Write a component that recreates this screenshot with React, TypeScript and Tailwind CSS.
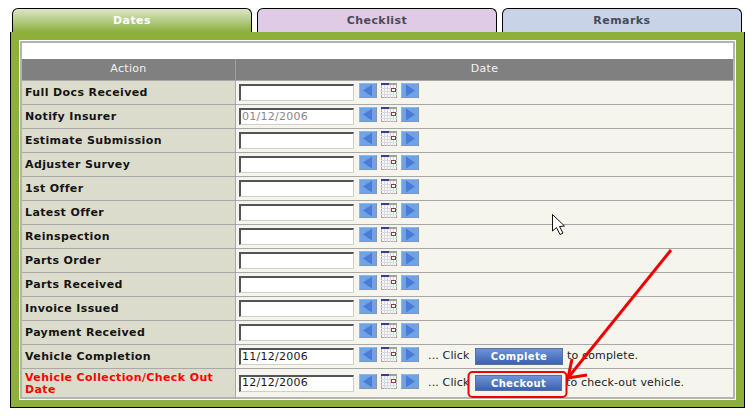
import React from "react";

const rows: { label: string; value?: string; disabled?: boolean; extra?: [string, string, string]; red?: boolean; tall?: boolean }[] = [
  { label: "Full Docs Received" },
  { label: "Notify Insurer", value: "01/12/2006", disabled: true },
  { label: "Estimate Submission" },
  { label: "Adjuster Survey" },
  { label: "1st Offer" },
  { label: "Latest Offer" },
  { label: "Reinspection" },
  { label: "Parts Order" },
  { label: "Parts Received" },
  { label: "Invoice Issued" },
  { label: "Payment Received" },
  { label: "Vehicle Completion", value: "11/12/2006", extra: ["Complete", "to complete.", "w-[88px] h-[17px]"] },
  { label: "Vehicle Collection/Check Out Date", value: "12/12/2006", extra: ["Checkout", "to check-out vehicle.", "w-[87px] h-[16px]"], red: true, tall: true },
];

function ArrowBtn({ dir }: { dir: "l" | "r" }) {
  return (
    <svg width="18" height="15" viewBox="0 0 18 15" className="block shrink-0">
      <rect x="0" y="0" width="18" height="15" fill="#6fa3e6" />
      <path d="M0.5 14.5V0.5H17.5" fill="none" stroke="#8fb8ea" />
      <path d="M0.5 14.5H17.5V0.5" fill="none" stroke="#8a94a4" />
      {dir === "l" ? <path d="M4 7.5L13 1.5V13.5Z" fill="#4a7cd6" /> : <path d="M14 7.5L5 1.5V13.5Z" fill="#4a7cd6" />}
    </svg>
  );
}

function Cal() {
  return (
    <svg width="16" height="15" viewBox="0 0 16 15" className="block shrink-0">
      <rect x="0.5" y="0.5" width="15" height="14" fill="#f8f8f8" stroke="#a8a8a8" />
      <path d="M0 5.5H16M0 8.5H16M0 11.5H16M3.5 2V15M6.5 2V15M9.5 2V15M12.5 2V15" stroke="#d8d8e0" />
      <rect x="0" y="0" width="8" height="2" fill="#3a3a9c" />
      <rect x="8" y="0" width="8" height="2" fill="#a0a0a0" />
      <rect x="10.5" y="5.5" width="4" height="3" fill="#fff" stroke="#9c3a3a" />
    </svg>
  );
}

function Tab({ label, active, bg }: { label: string; active?: boolean; bg: string }) {
  return (
    <div
      className={`w-[240px] h-[24px] pt-[1px] border border-b-0 border-black rounded-t-[6px] flex items-center justify-center font-bold text-[11px] tracking-[0.45px] ${bg} ${active ? "text-white" : "text-[#4a4a55]"}`}
    >
      {label}
    </div>
  );
}

export default function App() {
  return (
    <div className="relative w-[753px] h-[416px] bg-white overflow-hidden text-[11px] font-['DejaVu_Sans',Verdana,sans-serif]">
      <div className="flex gap-[5px] pl-[12px] pt-[8px] h-[32px]">
        <Tab label="Dates" active bg="bg-gradient-to-b from-[#dde8c4] to-[#8cb03a]" />
        <Tab label="Checklist" bg="bg-[#e0cbe6]" />
        <Tab label="Remarks" bg="bg-[#c9d3e8]" />
      </div>
      <div className="ml-[10px] w-[735px] h-[376px] border border-t-0 border-black bg-[#8cb03a] pl-[9px] pt-[9px]">
        <div className="w-[715px] h-[358px] border-2 border-[#b4b4b4] bg-white outline outline-1 outline-white">
          <div className="h-[16px] bg-white" />
          <div className="flex h-[21px] bg-[#808080] text-[#f2f2f2] text-[11px] tracking-[0.3px]">
            <div className="w-[214px] flex items-center justify-center border-r border-[#a0a0a0]">Action</div>
            <div className="flex-1 flex items-center justify-center">Date</div>
          </div>
          {rows.map((r) => (
            <div key={r.label} className={`flex border-t border-[#a8a8a8] ${r.tall ? "h-[29px]" : "h-[24px]"}`}>
              <div
                className={`w-[214px] shrink-0 bg-[#dcdccc] border-r border-[#a8a8a8] pl-[3px] pt-[1px] flex items-center font-bold text-[11px] leading-[12px] tracking-[0.38px] ${r.red ? "text-[#ff0000]" : "text-[#141414]"}`}
              >
                {r.label}
              </div>
              <div className="flex-1 bg-[#f5f5ee] pl-[3px] flex items-center text-[#222]">
                <div
                  className={`w-[115px] h-[17px] bg-white border border-[#d0d0c8] border-l-[2px] border-t-[2px] border-l-[#555] border-t-[#555] pl-[1px] flex items-center text-[11px] tracking-[0.25px] ${r.disabled ? "text-[#888]" : "text-[#1a1a1a]"}`}
                >
                  {r.value}
                </div>
                <div className="flex items-center ml-[5px] -mt-[4px]">
                  <ArrowBtn dir="l" />
                  <div className="w-[4px]" />
                  <Cal />
                  <div className="w-[4px]" />
                  <ArrowBtn dir="r" />
                </div>
                {r.extra && (
                  <div className="flex items-center ml-[9px] text-[11px] tracking-[0.15px] text-[#222]">
                    <span className="w-[47px]">... Click</span>
                    <span className={`${r.extra[2]} bg-gradient-to-b from-[#6f93d8] to-[#3c62b0] border border-[#5a6f9c] flex items-center justify-center text-white font-bold text-[10px] tracking-[0.35px]`}>
                      {r.extra[0]}
                    </span>
                    <span className="ml-[4px]">{r.extra[1]}</span>
                  </div>
                )}
              </div>
            </div>
          ))}
        </div>
      </div>

      {/* screenshot annotations lying over the page */}
      <svg className="absolute left-0 top-0 pointer-events-none" width="753" height="416" viewBox="0 0 753 416">
        <rect x="468.5" y="372" width="98" height="25" rx="4" fill="none" stroke="#f00000" strokeWidth="2" />
        <path d="M671 250L567 379" fill="none" stroke="#f00000" strokeWidth="3" />
        <path d="M572 359L568 378L587 375" fill="none" stroke="#f00000" strokeWidth="3" />
        <path d="M552.5 214.5V231L556.5 227.5L560 234.5L563 233L559.5 226.5L564.5 226Z" fill="#fff" stroke="#111" strokeWidth="1" />
      </svg>
    </div>
  );
}
